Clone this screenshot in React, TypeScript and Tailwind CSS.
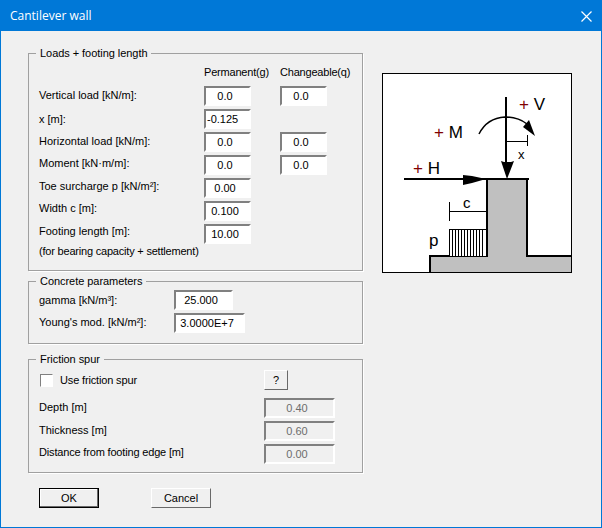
const font = "font-['Liberation_Sans',Arial,sans-serif]";

function Field({ value, w = "w-[47px]", disabled = false, left = false }: { value: string; w?: string; disabled?: boolean; left?: boolean }) {
  return (
    <div
      className={`${w} h-[20px] shrink-0 border-2 border-t-[#808080] border-l-[#808080] border-r-white border-b-white text-[11px] leading-[16px] ${left ? "pl-[1px] text-left" : "pr-[5px] text-center"} ${disabled ? "bg-[#f0f0f0] text-[#6d6d6d]" : "bg-white text-black"}`}
    >
      {value}
    </div>
  );
}

function Row({ label, a, b, lift = "" }: { label: string; a: string; b?: string; lift?: string }) {
  return (
    <div className="flex h-[20px] items-center">
      <div className={`w-[175px] shrink-0 pl-[10px] text-[11px] ${lift}`}>{label}</div>
      <Field value={a} left={a.startsWith("-")} />
      {b && (
        <div className="ml-[29px]">
          <Field value={b} />
        </div>
      )}
    </div>
  );
}

function Group({ title, className, children }: { title: string; className: string; children: React.ReactNode }) {
  return (
    <fieldset className={`w-[335px] border border-[#a0a0a0] shadow-[1px_1px_0_#ffffff] ${className}`}>
      <legend className="ml-[7px] px-[4px] text-[11px] leading-[12px] tracking-[-0.05px]">{title}</legend>
      {children}
    </fieldset>
  );
}

function DisabledRow({ label, value, lift = "" }: { label: string; value: string; lift?: string }) {
  return (
    <div className="flex h-[20px] items-center">
      <div className={`w-[235px] shrink-0 pl-[10px] text-[11px] ${lift}`}>{label}</div>
      <Field value={value} w="w-[71px]" disabled />
    </div>
  );
}

function WallDiagram() {
  return (
    <div className="mt-[26px] ml-[19px] h-[200px] w-[190px] border border-black bg-white">
      <svg width="188" height="198" viewBox="383 74 188 198" className="block">
        <rect x="429" y="256" width="143" height="16" fill="#c0c0c0" />
        <rect x="486" y="179" width="41" height="80" fill="#c0c0c0" />
        <path d="M430 272V256H487V179H527V256H572" fill="none" stroke="#000" strokeWidth="2" />
        <path d="M404 179H529" stroke="#000" strokeWidth="2" />
        <path d="M463 175L472 176L486 179L472 183L463 185Z" fill="#000" />
        <path d="M506 97V165" stroke="#000" strokeWidth="2" />
        <path d="M501 161L504 162H511L514 161L507 179Z" fill="#000" />
        <path d="M479 134Q487 118 505 117Q518 117 527 124" fill="none" stroke="#000" strokeWidth="1.5" />
        <path d="M523 127L529 120L535 136Z" fill="#000" />
        <path d="M507 141.5H527M527.5 135V146" stroke="#000" strokeWidth="1" fill="none" />
        <path d="M449 211.5H486M449.5 202V221" stroke="#000" strokeWidth="1" fill="none" />
        <rect x="449" y="229" width="37" height="27" fill="#fff" />
        <path d="M449 229.5H486M449.5 229V256M452.5 229V256M455.5 229V256M458.5 229V256M461.5 229V256M464.5 229V256M467.5 229V256M470.5 229V256M473.5 229V256M476.5 229V256M479.5 229V256M482.5 229V256" stroke="#000" strokeWidth="1" />
        <g fontSize="17" fontFamily="'Liberation Sans', Arial, sans-serif" fill="#000">
          <text x="519" y="110"><tspan fill="#800000">+</tspan> V</text>
          <text x="434" y="138"><tspan fill="#800000">+</tspan> M</text>
          <text x="413" y="174"><tspan fill="#800000">+</tspan> H</text>
          <text x="429" y="246">p</text>
          <text x="463" y="208" fontSize="15">c</text>
          <text x="518" y="159" fontSize="13">x</text>
        </g>
      </svg>
    </div>
  );
}

export default function App() {
  return (
    <div className={`flex h-[528px] w-[602px] flex-col border border-[#0078d7] bg-[#f0f0f0] text-black ${font}`}>
      <div className="flex h-[30px] shrink-0 items-center justify-between bg-[#0078d7] pr-[9px] pl-[9px] font-['Open_Sans',sans-serif] text-[12px] text-white">
        <span>Cantilever wall</span>
        <svg width="11" height="11" viewBox="0 0 11 11">
          <path d="M0.5 0.5L10.5 10.5M10.5 0.5L0.5 10.5" stroke="#fff" strokeWidth="1.2" fill="none" />
        </svg>
      </div>
      <div className="flex pl-[27px] pt-[16px]">
        <div className="flex flex-col">
          <Group title="Loads + footing length" className="h-[224px]">
            <div className="flex h-[27px] pt-[5px] pl-[175px] text-[11px] tracking-[-0.2px]">
              <span className="w-[76px]">Permanent(g)</span>
              <span>Changeable(q)</span>
            </div>
            <div className="flex flex-col gap-[3px]">
              <Row label="Vertical load [kN/m]:" a="0.0" b="0.0" lift="pb-[2px]" />
              <Row label="x [m]:" a="-0.125" />
              <Row label="Horizontal load [kN/m]:" a="0.0" b="0.0" lift="pb-[2px]" />
              <Row label="Moment [kN·m/m]:" a="0.0" b="0.0" lift="pb-[4px]" />
              <Row label="Toe surcharge p [kN/m²]:" a="0.00" lift="pb-[4px]" />
              <Row label="Width  c [m]:" a="0.100" lift="pb-[6px]" />
              <Row label="Footing length [m]:" a="10.00" lift="pb-[6px]" />
            </div>
            <div className="mt-[1px] pl-[10px] text-[11px] leading-[12px] tracking-[-0.2px]">(for bearing capacity + settlement)</div>
          </Group>
          <Group title="Concrete parameters" className="mt-[4px] h-[69px]">
            <div className="flex flex-col gap-[3px] pt-[3px]">
              <div className="flex h-[20px] items-center">
                <div className="w-[145px] shrink-0 pl-[10px] text-[11px]">gamma [kN/m³]:</div>
                <Field value="25.000" w="w-[59px]" />
              </div>
              <div className="flex h-[20px] items-center">
                <div className="w-[145px] shrink-0 pl-[10px] pb-[2px] text-[11px]">Young's mod. [kN/m²]:</div>
                <Field value="3.0000E+7" w="w-[71px]" />
              </div>
            </div>
          </Group>
          <Group title="Friction spur" className="mt-[9px] h-[120px]">
            <div className="mt-[3px] flex h-[24px] items-center pl-[11px] text-[11px]">
              <div className="h-[13px] w-[13px] border border-t-[#808080] border-l-[#808080] border-r-white border-b-white bg-white" />
              <span className="ml-[7px] w-[204px] pt-[1px] tracking-[-0.15px]">Use friction spur</span>
              <button className="h-[20px] w-[24px] border border-t-white border-l-white border-r-[#696969] border-b-[#696969] bg-[#f0f0f0] text-[11px]">?</button>
            </div>
            <div className="flex flex-col gap-[3px] pt-[6px]">
              <DisabledRow label="Depth [m]" value="0.40" lift="pb-[2px]" />
              <DisabledRow label="Thickness [m]" value="0.60" lift="pb-[2px]" />
              <DisabledRow label="Distance from footing edge [m]" value="0.00" lift="pb-[4px] tracking-[-0.17px]" />
            </div>
          </Group>
          <div className="mt-[15px] flex pl-[11px] text-[11px]">
            <button className="h-[20px] w-[60px] border border-black bg-[#f0f0f0] shadow-[inset_-1px_-1px_0_#696969,inset_1px_1px_0_#ffffff]">OK</button>
            <button className="ml-[52px] h-[20px] w-[60px] border border-t-white border-l-white border-r-[#696969] border-b-[#696969] bg-[#f0f0f0]">Cancel</button>
          </div>
        </div>
        <WallDiagram />
      </div>
    </div>
  );
}
